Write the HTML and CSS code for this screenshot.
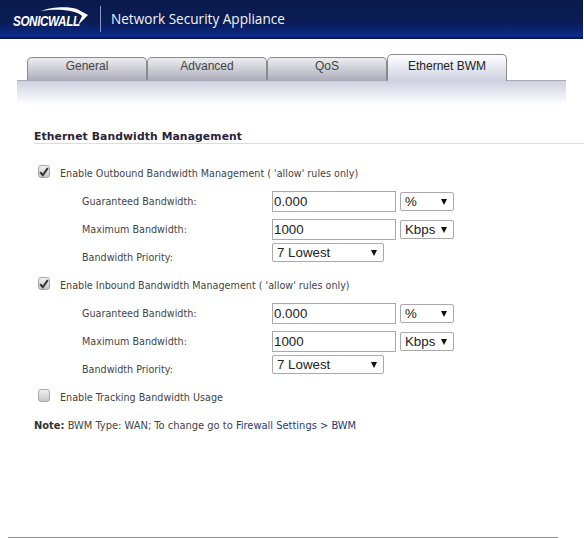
FILE: index.html
```html
<!DOCTYPE html>
<html lang="en">
<head>
    <meta charset="UTF-8">
    <title>Network Security Appliance</title>
    <link rel="stylesheet" href="styles.css">
</head>
<body>

<header class="top-bar">
    <div class="logo">
        <span class="logo-text">SONICWALL</span>
        <svg class="logo-swoosh" width="100" height="36" viewBox="0 0 100 36">
            <path d="M41 11 C50 7 68 6 77 9 L88 15 L78 25 L82 16 C78 11 60 8 41 11 Z" fill="#fff"/>
        </svg>
    </div>
    <div class="top-divider"></div>
    <div class="top-title">Network Security Appliance</div>
</header>

<nav class="tabs">
    <div class="tab">General</div>
    <div class="tab">Advanced</div>
    <div class="tab">QoS</div>
    <div class="tab tab-active">Ethernet BWM</div>
</nav>
<div class="tab-strip"></div>

<section class="content">
    <h2 class="section-title">Ethernet Bandwidth Management</h2>

    <div class="row check-row">
        <span class="check is-checked"><svg width="10" height="10" viewBox="0 0 10 10"><path d="M1.2 5.2 L3.8 8.2 L8.8 1.2" fill="none" stroke="#333" stroke-width="2"/></svg></span>
        <span>Enable Outbound Bandwidth Management ( 'allow' rules only)</span>
    </div>
    <div class="row field-row">
        <span class="field-label">Guaranteed Bandwidth:</span>
        <div class="text-box">0.000</div>
        <div class="drop drop-unit">%</div>
    </div>
    <div class="row field-row">
        <span class="field-label">Maximum Bandwidth:</span>
        <div class="text-box">1000</div>
        <div class="drop drop-unit">Kbps</div>
    </div>
    <div class="row field-row">
        <span class="field-label">Bandwidth Priority:</span>
        <div class="drop drop-priority">7 Lowest</div>
    </div>

    <div class="row check-row">
        <span class="check is-checked"><svg width="10" height="10" viewBox="0 0 10 10"><path d="M1.2 5.2 L3.8 8.2 L8.8 1.2" fill="none" stroke="#333" stroke-width="2"/></svg></span>
        <span>Enable Inbound Bandwidth Management ( 'allow' rules only)</span>
    </div>
    <div class="row field-row">
        <span class="field-label">Guaranteed Bandwidth:</span>
        <div class="text-box">0.000</div>
        <div class="drop drop-unit">%</div>
    </div>
    <div class="row field-row">
        <span class="field-label">Maximum Bandwidth:</span>
        <div class="text-box">1000</div>
        <div class="drop drop-unit">Kbps</div>
    </div>
    <div class="row field-row">
        <span class="field-label">Bandwidth Priority:</span>
        <div class="drop drop-priority">7 Lowest</div>
    </div>

    <div class="row check-row">
        <span class="check"></span>
        <span>Enable Tracking Bandwidth Usage</span>
    </div>

    <div class="row note">
        <span><b>Note:</b> BWM Type: WAN; To change go to <a href="#">Firewall Settings &gt; BWM</a></span>
    </div>
</section>

<div class="page-end"></div>

</body>
</html>
```

FILE: styles.css
```css
*{
    margin: 0;
    padding: 0;
    box-sizing: border-box;
}

html, body{
    height: 538px;
    overflow: hidden;
}

body{
    width: 584px;
    background-color: #fff;
    font-family: "DejaVu Sans Condensed", "DejaVu Sans", sans-serif;
    font-size: 10.7px;
    color: #444;
    display: flex;
    flex-direction: column;
}

.top-bar{
    display: flex;
    align-items: center;
    height: 39px;
    width: 583px;
    flex-shrink: 0;
    padding-bottom: 3px;
    background: linear-gradient(#0a1a4c 0%, #0a1c55 55%, #0b2a8a 94%, #0a1a4c 95%);
    color: #fff;
}

.logo{
    position: relative;
    width: 100px;
    height: 36px;
    padding: 12px 0 0 13px;
}

.logo-text{
    display: block;
    width: 90px;
    font-family: "Liberation Sans", sans-serif;
    font-size: 15px;
    font-weight: bold;
    font-style: italic;
    letter-spacing: -0.5px;
    transform: scaleX(0.78);
    transform-origin: left;
}

.logo-swoosh{
    position: absolute;
    top: 0;
    left: 0;
}

.top-divider{
    width: 1px;
    height: 26px;
    margin-top: 2px;
    background-color: #8d9bc4;
}

.top-title{
    margin-left: 10px;
    font-family: "Open Sans", sans-serif;
    font-size: 13.6px;
    color: #f2f4fa;
}

.tabs{
    display: flex;
    align-items: flex-end;
    height: 41px;
    padding-left: 27px;
    flex-shrink: 0;
}

.tab{
    width: 120px;
    height: 23px;
    padding-top: 1px;
    border: 1px solid #8a8a8a;
    border-bottom: none;
    border-radius: 5px 5px 0 0;
    background: linear-gradient(#ededf0, #adaebb);
    font-family: "Liberation Sans", sans-serif;
    font-size: 12px;
    text-align: center;
    color: #444;
}

.tab-active{
    height: 27px;
    padding-top: 4px;
    margin-bottom: -1px;
    position: relative;
    background: linear-gradient(#fff, #cdd1e0);
    color: #222;
}

.tab-strip{
    width: 549px;
    height: 24px;
    margin-left: 17px;
    flex-shrink: 0;
    border-top: 1px solid #a8a9b5;
    background: linear-gradient(#cdd0e0, #fff);
}

.content{
    margin-left: 34px;
    flex: 1;
}

.section-title{
    height: 40px;
    padding-top: 26px;
    margin-bottom: 15px;
    border-bottom: 1px solid #ddd;
    font-family: "DejaVu Sans", sans-serif;
    font-size: 10.8px;
    font-weight: bold;
    color: #2a2338;
    letter-spacing: 0.1px;
}

.row{
    display: flex;
    align-items: center;
    height: 28px;
}

.check-row{
    padding-left: 4px;
}

.check{
    display: flex;
    align-items: center;
    justify-content: center;
    width: 12px;
    height: 13px;
    margin-right: 10px;
    margin-top: -3px;
    border: 1px solid #a8a8a8;
    border-radius: 3px;
    background: linear-gradient(#f0f0f0, #c8c8c8);
}

.field-row{
    padding-left: 48px;
}

.field-label{
    width: 190px;
}

.text-box{
    width: 124px;
    height: 21px;
    padding-left: 1px;
    margin-right: 4px;
    border: 1px solid #a9a9a9;
    font-family: "Liberation Sans", sans-serif;
    font-size: 13.3px;
    line-height: 19px;
    color: #222;
}

.drop{
    position: relative;
    height: 19px;
    padding-left: 4px;
    border: 1px solid #a9a9a9;
    border-radius: 2px;
    background-color: #fff;
    font-family: "Liberation Sans", sans-serif;
    font-size: 13.3px;
    line-height: 17px;
    color: #222;
}

.drop::after{
    content: "";
    position: absolute;
    top: 6px;
    right: 6px;
    border-left: 3px solid transparent;
    border-right: 3px solid transparent;
    border-top: 6px solid #111;
}

.drop-unit{
    width: 54px;
}

.drop-priority{
    width: 112px;
    margin-bottom: 10px;
}

.note{
    font-size: 11px;
}

.note a{
    color: #1f3a78;
    text-decoration: none;
}

.note b{
    color: #333;
}

.page-end{
    width: 550px;
    height: 1px;
    margin-left: 8px;
    flex-shrink: 0;
    background-color: #8c8c8c;
}
```
